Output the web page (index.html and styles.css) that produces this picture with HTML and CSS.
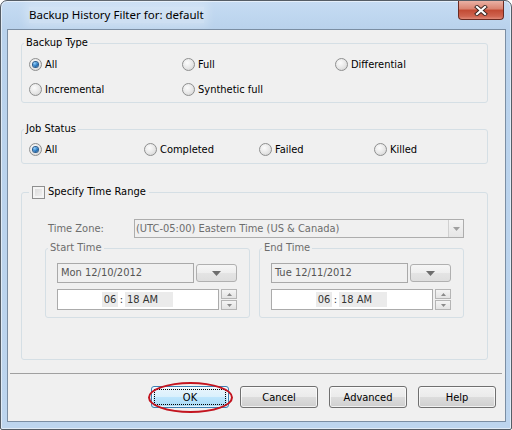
FILE: index.html
```html
<!DOCTYPE html>
<html>
<head>
  <meta charset="utf-8">
  <title>Backup History Filter</title>
  <link rel="stylesheet" href="styles.css">
</head>
<body>
  <div class="window">
    <div class="titlebar">
      <span class="title">Backup History Filter for: default</span>
      <div class="close">
        <svg width="14" height="11" viewBox="0 0 14 11">
          <path d="M3 2 L11 9 M11 2 L3 9" stroke="#3a2520" stroke-width="4" stroke-linecap="square"/>
          <path d="M3 2 L11 9 M11 2 L3 9" stroke="#fff" stroke-width="2.2" stroke-linecap="square"/>
        </svg>
      </div>
    </div>

    <div class="client">
      <fieldset class="group">
        <legend>Backup Type</legend>
        <div class="options three">
          <label class="radio"><span class="dot checked"></span>All</label>
          <label class="radio"><span class="dot"></span>Full</label>
          <label class="radio"><span class="dot"></span>Differential</label>
          <label class="radio"><span class="dot"></span>Incremental</label>
          <label class="radio"><span class="dot"></span>Synthetic full</label>
        </div>
      </fieldset>

      <fieldset class="group job">
        <legend>Job Status</legend>
        <div class="options four">
          <label class="radio"><span class="dot checked"></span>All</label>
          <label class="radio"><span class="dot"></span>Completed</label>
          <label class="radio"><span class="dot"></span>Failed</label>
          <label class="radio"><span class="dot"></span>Killed</label>
        </div>
      </fieldset>

      <fieldset class="group range">
        <legend><span class="check"></span>Specify Time Range</legend>
        <div class="range-body">
          <div class="tz-row">
            <span class="tz-label">Time Zone:</span>
            <div class="select">
              <span class="select-text">(UTC-05:00) Eastern Time (US &amp; Canada)</span>
              <span class="select-btn">
                <svg width="7" height="4" viewBox="0 0 7 4"><path d="M0 0 H7 L3.5 4 Z" fill="#a0a0a0"/></svg>
              </span>
            </div>
          </div>

          <div class="sub-row">
            <fieldset class="sub">
              <legend>Start Time</legend>
              <div class="date-row">
                <div class="date">Mon 12/10/2012</div>
                <div class="date-btn">
                  <svg width="9" height="5" viewBox="0 0 9 5"><path d="M0 0 H9 L4.5 5 Z" fill="#6d6d6d"/></svg>
                </div>
              </div>
              <div class="time-row">
                <div class="time"><span class="hh">06</span><span class="colon">:</span><span class="mm">18 AM</span></div>
                <div class="spin">
                  <span class="spin-up"><svg width="5" height="3" viewBox="0 0 5 3"><path d="M0 3 H5 L2.5 0 Z" fill="#8a8a8a"/></svg></span>
                  <span class="spin-down"><svg width="5" height="3" viewBox="0 0 5 3"><path d="M0 0 H5 L2.5 3 Z" fill="#8a8a8a"/></svg></span>
                </div>
              </div>
            </fieldset>

            <fieldset class="sub">
              <legend>End Time</legend>
              <div class="date-row">
                <div class="date">Tue 12/11/2012</div>
                <div class="date-btn">
                  <svg width="9" height="5" viewBox="0 0 9 5"><path d="M0 0 H9 L4.5 5 Z" fill="#6d6d6d"/></svg>
                </div>
              </div>
              <div class="time-row">
                <div class="time"><span class="hh">06</span><span class="colon">:</span><span class="mm">18 AM</span></div>
                <div class="spin">
                  <span class="spin-up"><svg width="5" height="3" viewBox="0 0 5 3"><path d="M0 3 H5 L2.5 0 Z" fill="#8a8a8a"/></svg></span>
                  <span class="spin-down"><svg width="5" height="3" viewBox="0 0 5 3"><path d="M0 0 H5 L2.5 3 Z" fill="#8a8a8a"/></svg></span>
                </div>
              </div>
            </fieldset>
          </div>
        </div>
      </fieldset>

      <div class="separator"></div>

      <div class="buttons">
        <button class="btn default">OK</button>
        <button class="btn">Cancel</button>
        <button class="btn">Advanced</button>
        <button class="btn">Help</button>
      </div>
    </div>
  </div>
</body>
</html>
```

FILE: styles.css
```css
body {
  margin: 0;
  font-family: "DejaVu Sans Condensed", "Liberation Sans", sans-serif;
  font-size: 11px;
  color: #000;
}

.window {
  width: 512px;
  height: 430px;
  box-sizing: border-box;
  border: 1px solid #555d66;
  border-radius: 7px 7px 2px 2px;
  background: linear-gradient(#c6dcf3, #b9d2ec 28px, #bdd5ee);
  box-shadow: inset 0 0 0 1px rgba(255, 255, 255, 0.55);
  padding: 0 5px 7px 6px;
  display: flex;
  flex-direction: column;
}

.titlebar {
  height: 28px;
  display: flex;
  align-items: flex-start;
}

.title {
  margin: 6px 0 0 22px;
  font-family: "Noto Sans", "Liberation Sans", sans-serif;
  font-size: 11.5px;
  line-height: 16px;
  background: rgba(255, 255, 255, 0.25);
  box-shadow: 0 0 8px 4px rgba(255, 255, 255, 0.25);
}

.close {
  margin-left: auto;
  margin-right: 2px;
  width: 46px;
  height: 19px;
  box-sizing: border-box;
  border: 1px solid #6b2b22;
  border-top: none;
  border-radius: 0 0 4px 4px;
  background: linear-gradient(#eab1a4, #d9826f 45%, #c24a33 50%, #cf6450 85%, #e08a78);
  display: flex;
  align-items: center;
  justify-content: center;
}

.client {
  flex: 1;
  border: 1px solid #7b8ea3;
  background: #f0f0f0;
  padding: 0 17px 0 13px;
  display: flex;
  flex-direction: column;
}

.group {
  margin: 6px 0 0;
  padding: 2px 0 0 7px;
  border: 1px solid #d5dfe5;
  border-radius: 3px;
  min-width: 0;
}

.group > legend {
  padding: 0 2px;
  margin-left: -5px;
  line-height: 14px;
}

.group.job {
  margin-top: 19px;
  padding-top: 1px;
  padding-bottom: 1px;
}

.options {
  display: grid;
  grid-auto-rows: 25px;
  align-items: center;
}

.options.three {
  grid-template-columns: repeat(3, 153px);
}

.options.four {
  grid-template-columns: repeat(4, 115px);
}

.radio {
  display: flex;
  align-items: center;
  gap: 3px;
}

.dot {
  width: 13px;
  height: 13px;
  box-sizing: border-box;
  border: 1px solid #8e8f8f;
  border-radius: 50%;
  background: radial-gradient(circle at 40% 35%, #fcfcfc, #e6e6e6 55%, #cdcdcd);
  display: flex;
  align-items: center;
  justify-content: center;
}

.dot.checked::after {
  content: "";
  width: 5px;
  height: 5px;
  border-radius: 50%;
  background: radial-gradient(circle at 35% 30%, #8fd0ff, #1f6fb8 60%, #123e72);
  box-shadow: 0 0 0 1px #2b5d8e;
}

.group.range {
  margin-top: 21px;
  padding: 20px 0 41px 7px;
}

.group.range > legend {
  margin-left: 0;
  padding: 0 3px;
  display: flex;
  align-items: center;
  gap: 3px;
}

.check {
  width: 13px;
  height: 13px;
  box-sizing: border-box;
  border: 1px solid #8e8f8f;
  background: linear-gradient(135deg, #d8d8d8, #f4f4f4);
  box-shadow: inset 0 0 0 2px #f4f4f4;
}

.range-body {
  margin-left: 16px;
  width: 419px;
  color: #6d6d6d;
}

.tz-row {
  display: flex;
  height: 19px;
  align-items: center;
}

.tz-label {
  width: 86px;
  padding-left: 3px;
}

.select {
  flex: 1;
  height: 19px;
  box-sizing: border-box;
  border: 1px solid #adadad;
  background: #f0f0f0;
  display: flex;
  align-items: center;
}

.select-text {
  flex: 1;
  padding-left: 1px;
}

.select-btn {
  width: 15px;
  height: 17px;
  box-sizing: border-box;
  border-left: 1px solid #d0d0d0;
  background: linear-gradient(#f4f4f4, #e6e6e6);
  display: flex;
  align-items: center;
  justify-content: center;
}

.sub-row {
  margin-top: 3px;
  display: flex;
  gap: 9px;
}

.sub {
  flex: 1;
  margin: 0;
  padding: 8px 0 7px 11px;
  border: 1px solid #d5dfe5;
  border-radius: 3px;
  min-width: 0;
}

.sub > legend {
  padding: 0 2px;
  margin-left: -9px;
  line-height: 14px;
}

.date-row {
  display: flex;
  align-items: center;
  gap: 2px;
  height: 20px;
}

.date {
  width: 137px;
  height: 20px;
  box-sizing: border-box;
  border: 1px solid #a9a9a9;
  background: #f0f0f0;
  color: #555;
  padding-left: 3px;
  line-height: 18px;
}

.date-btn {
  width: 41px;
  height: 18px;
  box-sizing: border-box;
  border: 1px solid #b0b0b0;
  border-radius: 3px;
  background: linear-gradient(#f6f6f6, #eeeeee 50%, #e4e4e4 50%, #dedede);
  display: flex;
  align-items: center;
  justify-content: center;
}

.time-row {
  margin-top: 6px;
  display: flex;
  gap: 2px;
  height: 21px;
}

.time {
  width: 162px;
  box-sizing: border-box;
  border: 1px solid #ababab;
  background: #fff;
  color: #333;
  padding: 2px 0 2px 44px;
  display: flex;
  line-height: 15px;
}

.hh {
  width: 16px;
  text-align: center;
  background: #ebebeb;
}

.colon {
  width: 7px;
  text-align: center;
}

.mm {
  width: 46px;
  padding-left: 2px;
  background: #ebebeb;
}

.spin {
  width: 16px;
  display: flex;
  flex-direction: column;
  gap: 1px;
}

.spin-up,
.spin-down {
  flex: 1;
  box-sizing: border-box;
  border: 1px solid #b5b5b5;
  background: linear-gradient(#f4f4f4, #e3e3e3);
  display: flex;
  align-items: center;
  justify-content: center;
}

.separator {
  margin: 13px -14px 0 -11px;
  height: 1px;
  background: #a0a0a0;
}

.buttons {
  margin: 12px -8px 0 0;
  display: flex;
  justify-content: flex-end;
  gap: 11px;
}

.btn {
  width: 78px;
  height: 22px;
  font: inherit;
  color: #000;
  border: 1px solid #707070;
  border-radius: 3px;
  background: linear-gradient(#f2f2f2, #ebebeb 50%, #dddddd 50%, #cfcfcf);
  box-shadow: inset 0 0 0 1px rgba(255, 255, 255, 0.7);
  padding: 0;
}

.btn.default {
  position: relative;
  border-color: #3c7fb1;
  background: linear-gradient(#eaf6fd, #d9f0fc 50%, #bee6fd 50%, #a7d9f5);
  outline: 1px dotted #000;
  outline-offset: -4px;
}

.btn.default::after {
  content: "";
  position: absolute;
  left: -4px;
  right: -5px;
  top: -5px;
  bottom: -6px;
  border: 2px solid #c3141f;
  border-radius: 50%;
}
```
